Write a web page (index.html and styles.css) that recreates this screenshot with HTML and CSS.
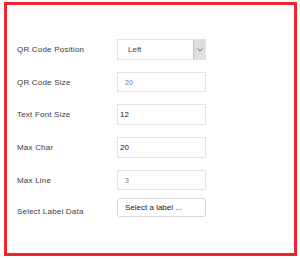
FILE: index.html
```html
<!DOCTYPE html>
<html lang="en">
<head>
  <meta charset="UTF-8" />
  <title>QR Label Settings</title>
  <link rel="stylesheet" href="styles.css">
</head>
<body>
  <div class="panel">
    <div class="form">
      <label>QR Code Position</label>
      <div class="select">
        <span>Left</span>
        <span class="arrow">
          <svg width="6" height="4" viewBox="0 0 6 4"><path d="M0.5 0.5 L3 3 L5.5 0.5" fill="none" stroke="#666" stroke-width="0.9"/></svg>
        </span>
      </div>

      <label>QR Code Size</label>
      <input type="text" class="field small" placeholder="20" />

      <label>Text Font Size</label>
      <input type="text" class="field" value="12" />

      <label>Max Char</label>
      <input type="text" class="field" value="20" />

      <label>Max Line</label>
      <input type="text" class="field small" placeholder="3" />

      <label class="low">Select Label Data</label>
      <button class="pick">Select a label ...</button>
    </div>
  </div>
</body>
</html>
```

FILE: styles.css
```css
body {
  margin: 0;
  font-family: 'Liberation Sans', Arial, sans-serif;
  background: #fff;
  color: #333;
}
.panel {
  margin: 2px 3px 0 4px;
  height: 254px;
  box-sizing: border-box;
  border: 3px solid #ee2530;
  padding: 34px 0 0 10px;
}
.form {
  display: grid;
  grid-template-columns: 100px 89px;
  row-gap: 12px;
  align-items: center;
}
.form label {
  font-size: 8px;
  letter-spacing: 0.2px;
  color: #3a3a3a;
}
.form label.low {
  align-self: start;
  padding-top: 9px;
  margin-top: -4px;
}
.select {
  height: 21px;
  box-sizing: border-box;
  border: 1px solid #e2e2e2;
  display: flex;
  align-items: center;
  justify-content: space-between;
  font-size: 8px;
  color: #444;
  padding-left: 10px;
}
.select .arrow {
  width: 11px;
  height: 19px;
  background: #dedede;
  border-left: 1px solid #c4c4c4;
  display: flex;
  align-items: center;
  justify-content: center;
}
.field {
  height: 21px;
  box-sizing: border-box;
  border: 1px solid #e2e2e2;
  padding: 0 0 0 2px;
  margin: 0;
  font-family: inherit;
  font-size: 8px;
  color: #222;
  width: 89px;
  outline: none;
}
.field.small {
  height: 20px;
  padding-left: 7px;
}
.field.small::placeholder {
  color: #777;
  font-size: 7px;
}
.pick {
  height: 19px;
  margin-top: -4px;
  width: 89px;
  box-sizing: border-box;
  border: 1px solid #d8d8d8;
  border-radius: 3px;
  background: #fff;
  font-family: inherit;
  font-size: 8px;
  color: #222;
  text-align: left;
  padding: 0 0 0 7px;
}
```
